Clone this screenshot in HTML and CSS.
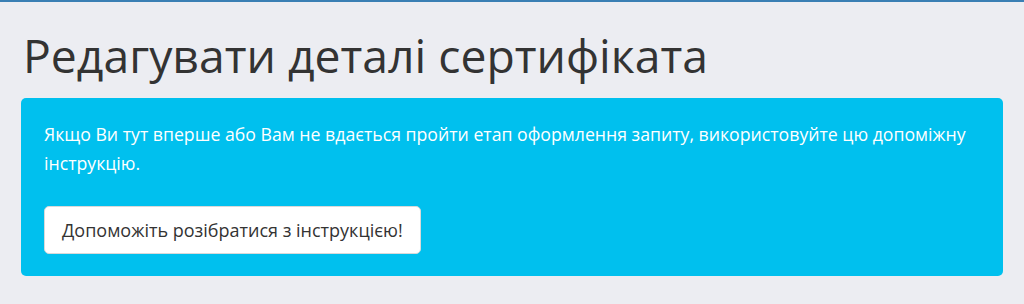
FILE: index.html
```html
<!DOCTYPE html>
<html lang="uk">
<head>
<meta charset="utf-8">
<link rel="stylesheet" href="styles.css">
</head>
<body>
<div class="topbar"></div>
<main class="content">
  <h1 class="title">Редагувати деталі сертифіката</h1>
  <section class="alert">
    <p class="alert-text">Якщо Ви тут вперше або Вам не вдається пройти етап оформлення запиту, використовуйте цю допоміжну інструкцію.</p>
    <button class="help-btn" type="button">Допоможіть розібратися з інструкцією!</button>
  </section>
</main>
</body>
</html>
```

FILE: styles.css
```css
html, body {
  margin: 0;
  padding: 0;
}
body {
  background: #ecedf2;
  font-family: "Open Sans", "Noto Sans", sans-serif;
  color: #333;
  width: 1024px;
  height: 304px;
  overflow: hidden;
}
.topbar {
  height: 2px;
  background: #3a7fb4;
}
.content {
  padding: 0 21px;
}
.title {
  margin: 0;
  padding: 24px 0 0 2px;
  height: 72px;
  font-size: 46.3px;
  font-weight: 400;
  line-height: 60px;
  color: #333;
}
.alert {
  background: #00c0ee;
  border-radius: 5px;
  padding: 22px 23px 22px 23px;
  color: #fff;
}
.alert-text {
  margin: 0 0 28px 0;
  font-size: 17.7px;
  line-height: 29px;
}
.help-btn {
  display: block;
  height: 48px;
  padding: 0 17px;
  background: #fff;
  border: 1px solid #d9d9d9;
  border-radius: 5px;
  font-family: inherit;
  font-size: 18px;
  color: #333;
}
```
